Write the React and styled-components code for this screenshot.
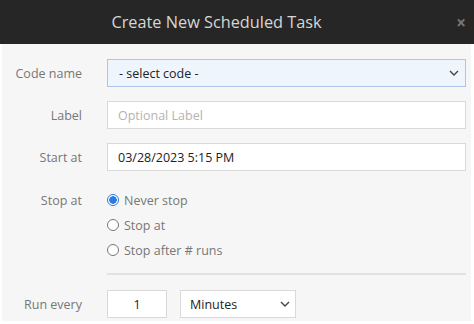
import styled, { createGlobalStyle } from "styled-components";

const GlobalStyle = createGlobalStyle`
  html, body {
    margin: 0;
    padding: 0;
    background: #ffffff;
    font-family: "Open Sans", "Liberation Sans", sans-serif;
  }
`;

const Chevron = () => (
  <svg width="10" height="6" viewBox="0 0 10 6">
    <path d="M1 1l4 4 4-4" fill="none" stroke="#444" strokeWidth="1.4" />
  </svg>
);

const App = () => {
  return (
    <Modal>
      <GlobalStyle />
      {/* header */}
      <Header>
        <Title>Create New Scheduled Task</Title>
        <Close>×</Close>
      </Header>

      {/* form body */}
      <Body>
        <Row>
          <Label>Code name</Label>
          <Select $focused>
            <span>- select code -</span>
            <Chevron />
          </Select>
        </Row>
        <Row>
          <Label>Label</Label>
          <Input $placeholder>Optional Label</Input>
        </Row>
        <Row>
          <Label>Start at</Label>
          <Input>03/28/2023 5:15 PM</Input>
        </Row>

        <StopRow>
          <Label>Stop at</Label>
          <RadioList>
            {["Never stop", "Stop at", "Stop after # runs"].map((text, i) => (
              <RadioItem key={text}>
                <Radio $checked={i === 0} />
                <span>{text}</span>
              </RadioItem>
            ))}
          </RadioList>
        </StopRow>

        <Row>
          <span />
          <Divider />
        </Row>

        <RunRow>
          <Label>Run every</Label>
          <Inline>
            <NumberBox>1</NumberBox>
            <SmallSelect>
              <span>Minutes</span>
              <Chevron />
            </SmallSelect>
          </Inline>
        </RunRow>
      </Body>
    </Modal>
  );
};

const Modal = styled.div`
  width: 474px;
  height: 324px;
  overflow: hidden;
  display: flex;
  flex-direction: column;
`;

const Header = styled.div`
  height: 44px;
  background: #262626;
  display: flex;
  align-items: center;
  justify-content: center;
  padding-right: 41px;
  position: relative;
  flex-shrink: 0;
`;

const Title = styled.div`
  color: #d6d6d6;
  font-size: 16.3px;
`;

const Close = styled.div`
  position: absolute;
  right: 8px;
  top: 11px;
  color: #777;
  font-size: 17px;
  font-weight: bold;
`;

const Body = styled.div`
  flex: 1;
  background: #f6f6f6;
  margin: 0 3px 3px 2px;
  padding: 15px 5px 0 0;
  display: flex;
  flex-direction: column;
  gap: 14px;
`;

const Row = styled.div`
  display: grid;
  grid-template-columns: 80px 359px;
  column-gap: 25px;
  align-items: center;
`;

const StopRow = styled(Row)`
  align-items: start;
  margin-top: 7px;
`;

const RunRow = styled(Row)`
  margin-top: 1px;
`;

const Label = styled.div`
  text-align: right;
  font-size: 12.5px;
  color: #777;
`;

const Field = styled.div`
  height: 28px;
  box-sizing: border-box;
  border: 1px solid #d9d9d9;
  background: #fff;
  display: flex;
  align-items: center;
  padding: 0 10px;
  font-size: 12.5px;
  color: #222;
`;

const Input = styled(Field)`
  color: ${(p) => (p.$placeholder ? "#b3b3b3" : "#222")};
`;

const Select = styled(Field)`
  justify-content: space-between;
  padding: 0 6px 0 11px;
  border-color: ${(p) => (p.$focused ? "#adc6e8" : "#d9d9d9")};
  background: ${(p) => (p.$focused ? "#eff5fc" : "#fff")};
`;

const RadioList = styled.div`
  display: flex;
  flex-direction: column;
  gap: 7px;
  margin-top: -1px;
`;

const RadioItem = styled.label`
  display: flex;
  align-items: center;
  gap: 5px;
  font-size: 12.5px;
  color: #777;
  height: 18px;
`;

const Radio = styled.span`
  width: 12px;
  height: 12px;
  box-sizing: border-box;
  border-radius: 50%;
  border: 1px solid ${(p) => (p.$checked ? "#2c7be5" : "#777")};
  background: ${(p) =>
    p.$checked ? "radial-gradient(circle, #2c7be5 0 3.5px, #fff 4px)" : "#fff"};
`;

const Divider = styled.div`
  height: 2px;
  background: #e2e2e2;
`;

const Inline = styled.div`
  display: flex;
  gap: 13px;
`;

const NumberBox = styled(Field)`
  width: 60px;
  justify-content: center;
`;

const SmallSelect = styled(Field)`
  width: 116px;
  justify-content: space-between;
  padding: 0 5px 0 9px;
`;

export default App;
